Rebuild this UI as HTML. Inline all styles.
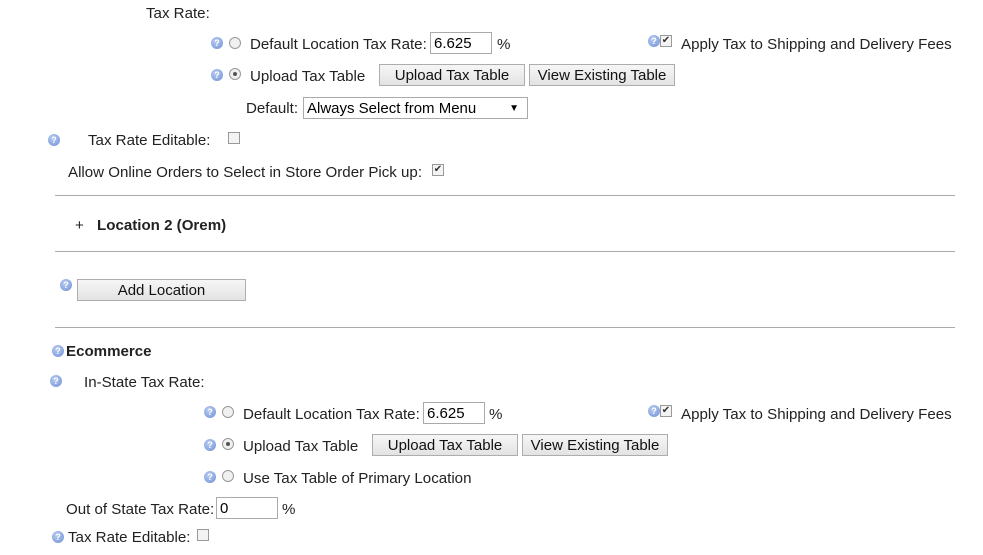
<!DOCTYPE html>
<html><head><style>
body{margin:0;width:983px;height:555px;background:#fff;position:relative;overflow:hidden;font-family:"Liberation Sans",sans-serif;font-size:15.1px;color:#222}
.a{position:absolute;white-space:nowrap;margin-top:1px}
.h{position:absolute;width:12px;height:12px;border-radius:50%;background:radial-gradient(circle at 40% 35%,#b9cdf0,#6f8fd6);color:#fff;font-size:9px;font-weight:bold;text-align:center;line-height:12px}
.r{position:absolute;width:12px;height:12px;border-radius:50%;border:1px solid #999;background:#f0f0f0;box-sizing:border-box}
.r.on::after{content:"";position:absolute;left:3px;top:3px;width:4px;height:4px;border-radius:50%;background:#555}
.c{position:absolute;width:12px;height:12px;border:1px solid #999;background:#f3f3f3;box-sizing:border-box;font-size:10px;line-height:10px;text-align:center;color:#333}
.btn{position:absolute;height:22px;border:1px solid #adadad;background:linear-gradient(#f6f6f6,#e3e3e3);box-sizing:border-box;text-align:center;line-height:21px;font-size:15px;color:#111}
.in{position:absolute;height:22px;border:1px solid #aaa;box-sizing:border-box;padding-left:3px;line-height:21px;font-size:15px;color:#000}
.ln{position:absolute;left:55px;width:900px;height:1px;background:#aaa}
</style></head><body>
<div class="a" style="left:146px;top:4px">Tax Rate:</div>
<div class="h" style="left:211px;top:37px">?</div><div class="r" style="left:229px;top:37px"></div>
<div class="a" style="left:250px;top:35px">Default Location Tax Rate:</div>
<div class="in" style="left:430px;top:32px;width:62px">6.625</div>
<div class="a" style="left:497px;top:35px">%</div>
<div class="h" style="left:648px;top:35px">?</div><div class="c" style="left:660px;top:35px">✔</div>
<div class="a" style="left:681px;top:35px">Apply Tax to Shipping and Delivery Fees</div>
<div class="h" style="left:211px;top:69px">?</div><div class="r on" style="left:229px;top:68px"></div>
<div class="a" style="left:250px;top:67px">Upload Tax Table</div>
<div class="btn" style="left:379px;top:64px;width:146px">Upload Tax Table</div>
<div class="btn" style="left:529px;top:64px;width:146px">View Existing Table</div>
<div class="a" style="left:246px;top:99px">Default:</div>
<div class="in" style="left:303px;top:97px;width:225px">Always Select from Menu<span style="position:absolute;right:8px;font-size:10px">▼</span></div>
<div class="h" style="left:48px;top:134px">?</div>
<div class="a" style="left:88px;top:131px">Tax Rate Editable:</div>
<div class="c" style="left:228px;top:132px"></div>
<div class="a" style="left:68px;top:163px">Allow Online Orders to Select in Store Order Pick up:</div>
<div class="c" style="left:432px;top:164px">✔</div>
<div class="ln" style="top:195px"></div>
<div class="a" style="left:75px;top:216px">+</div>
<div class="a" style="left:97px;top:216px;font-weight:bold">Location 2 (Orem)</div>
<div class="ln" style="top:251px"></div>
<div class="h" style="left:60px;top:279px">?</div>
<div class="btn" style="left:77px;top:279px;width:169px">Add Location</div>
<div class="ln" style="top:327px"></div>
<div class="h" style="left:52px;top:345px">?</div>
<div class="a" style="left:66px;top:342px;font-weight:bold">Ecommerce</div>
<div class="h" style="left:50px;top:375px">?</div>
<div class="a" style="left:84px;top:373px">In-State Tax Rate:</div>
<div class="h" style="left:204px;top:406px">?</div><div class="r" style="left:222px;top:406px"></div>
<div class="a" style="left:243px;top:405px">Default Location Tax Rate:</div>
<div class="in" style="left:423px;top:402px;width:62px">6.625</div>
<div class="a" style="left:489px;top:405px">%</div>
<div class="h" style="left:648px;top:405px">?</div><div class="c" style="left:660px;top:405px">✔</div>
<div class="a" style="left:681px;top:405px">Apply Tax to Shipping and Delivery Fees</div>
<div class="h" style="left:204px;top:439px">?</div><div class="r on" style="left:222px;top:438px"></div>
<div class="a" style="left:243px;top:437px">Upload Tax Table</div>
<div class="btn" style="left:372px;top:434px;width:146px">Upload Tax Table</div>
<div class="btn" style="left:522px;top:434px;width:146px">View Existing Table</div>
<div class="h" style="left:204px;top:471px">?</div><div class="r" style="left:222px;top:470px"></div>
<div class="a" style="left:243px;top:469px">Use Tax Table of Primary Location</div>
<div class="a" style="left:66px;top:500px">Out of State Tax Rate:</div>
<div class="in" style="left:216px;top:497px;width:62px">0</div>
<div class="a" style="left:282px;top:500px">%</div>
<div class="h" style="left:52px;top:531px">?</div>
<div class="a" style="left:68px;top:528px">Tax Rate Editable:</div>
<div class="c" style="left:197px;top:529px"></div>
</body></html>
